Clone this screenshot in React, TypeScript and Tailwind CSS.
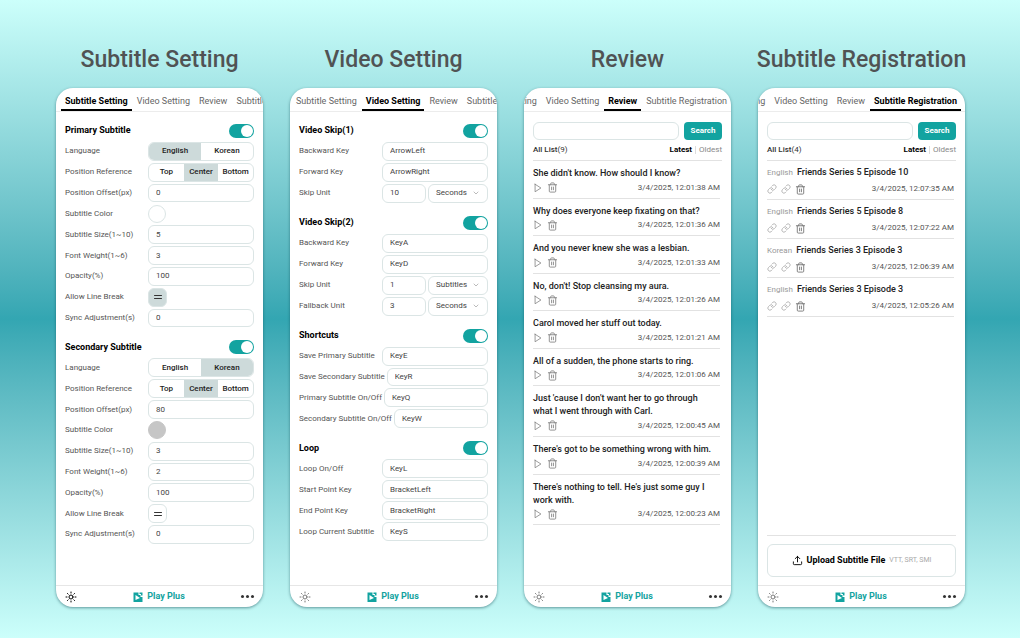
import { ReactNode } from "react";
import { FiChevronDown, FiLink, FiPlay, FiTrash2, FiUpload } from "react-icons/fi";
import { LuEqual, LuSun } from "react-icons/lu";
import clsx from "clsx";

const tabs = ["Subtitle Setting", "Video Setting", "Review", "Subtitle Registration"];

const field = "min-w-0 rounded-md border border-[#dbe5e5] bg-white text-[8px] text-[#444] outline-none";

function Logo() {
    return (
        <svg viewBox="0 0 20 20" className="size-[10px]">
            <path d="M1 1h10v5h4v4h4v10H1z" fill="#12a3a0" />
            <path d="M13 1h6v6h-3V4h-3z" fill="#12a3a0" />
            <path d="M5 6l9 6-9 4z" fill="#fff" />
        </svg>
    );
}

function Panel({ active, tabsClass, dim = true, children }: { active: string; tabsClass: string; dim?: boolean; children: ReactNode }) {
    return (
        <section className="flex min-w-0 flex-col">
            <h2 className="flex justify-center whitespace-nowrap text-[23px] leading-[30px] font-medium text-[#505354]">{active}</h2>
            <div className="mt-[13px] flex flex-1 flex-col overflow-hidden rounded-[17px] bg-white shadow-[0_1px_3px_rgba(0,60,70,0.5)]">
                <nav className={clsx("flex h-6 shrink-0 gap-px overflow-hidden border-b border-[#ececec]", tabsClass)}>
                    {tabs.map((tab) => (
                        <button
                            key={tab}
                            className={clsx("shrink-0 border-b-2 px-1 pt-[5px] text-[9px] leading-4 whitespace-nowrap", tab === active ? "border-black font-bold text-black" : "border-transparent text-[#666]")}
                        >
                            {tab}
                        </button>
                    ))}
                </nav>
                {children}
                <footer className="flex h-[22px] shrink-0 items-center justify-between border-t border-[#e6e6e6] px-[9px]">
                    <button aria-label="Theme"><LuSun size={12} className={dim ? "text-[#777]" : "text-black"} /></button>
                    <a href="#" className="flex items-center gap-1 text-[9px] font-bold text-[#12a3a0]"><Logo />Play Plus</a>
                    <button aria-label="More" className="flex gap-[2px]">
                        <span className="size-[3px] rounded-full bg-[#333]" />
                        <span className="size-[3px] rounded-full bg-[#333]" />
                        <span className="size-[3px] rounded-full bg-[#333]" />
                    </button>
                </footer>
            </div>
        </section>
    );
}

function Group({ title, children }: { title: string; children: ReactNode }) {
    return (
        <>
            <div className="flex min-h-5 flex-1 items-center justify-between not-first:mt-[9px]">
                <h3 className="text-[9px] font-bold text-black">{title}</h3>
                <label className="flex h-[14px] w-[25px] rounded-full bg-[#12a3a0] p-[1px]">
                    <input type="checkbox" role="switch" aria-label={title} defaultChecked className="ml-auto size-3 appearance-none rounded-full bg-white" />
                </label>
            </div>
            {children}
        </>
    );
}

function Row({ label, children }: { label: string; children: ReactNode }) {
    return (
        <div className="flex min-h-5 flex-1 py-[1px]">
            <span className="min-w-[83px] shrink-0 self-center pr-[2px] text-[8px] whitespace-nowrap text-[#555]">{label}</span>
            {children}
        </div>
    );
}

function TextRow({ label, value }: { label: string; value: string }) {
    return (
        <Row label={label}>
            <input aria-label={label} defaultValue={value} className={clsx(field, "w-0 flex-1 px-[7px]")} />
        </Row>
    );
}

function UnitRow({ label, value, unit }: { label: string; value: string; unit: string }) {
    return (
        <Row label={label}>
            <input aria-label={label} defaultValue={value} className={clsx(field, "w-11 px-[7px]")} />
            <div className="ml-[2px] grid flex-1 items-center">
                <select aria-label={`${label} type`} defaultValue={unit} className={clsx(field, "col-start-1 row-start-1 h-full w-full appearance-none px-[7px]")}>
                    <option>Seconds</option>
                    <option>Subtitles</option>
                </select>
                <FiChevronDown size={8} className="pointer-events-none col-start-1 row-start-1 mr-2 justify-self-end text-[#999]" />
            </div>
        </Row>
    );
}

function ChoiceRow({ label, options, value }: { label: string; options: string[]; value: string }) {
    return (
        <Row label={label}>
            <div className={clsx(field, "flex flex-1 overflow-hidden")}>
                {options.map((option) => (
                    <button key={option} className={clsx("w-0 flex-1 font-medium text-[#222]", option === value && "bg-[#cddada]")}>{option}</button>
                ))}
            </div>
        </Row>
    );
}

type Subtitle = { title: string; language: string; offset: string; white: boolean; size: string; weight: string; lineBreak: boolean };

function SubtitleGroup({ title, language, offset, white, size, weight, lineBreak }: Subtitle) {
    return (
        <Group title={title}>
            <ChoiceRow label="Language" options={["English", "Korean"]} value={language} />
            <ChoiceRow label="Position Reference" options={["Top", "Center", "Bottom"]} value="Center" />
            <TextRow label="Position Offset(px)" value={offset} />
            <Row label="Subtitle Color">
                <button aria-label="Subtitle Color" className={clsx("size-[18px] self-center rounded-full border", white ? "border-[#dbe5e5] bg-white" : "border-[#c6c6c6] bg-[#c6c6c6]")} />
            </Row>
            <TextRow label="Subtitle Size(1~10)" value={size} />
            <TextRow label="Font Weight(1~6)" value={weight} />
            <TextRow label="Opacity(%)" value="100" />
            <Row label="Allow Line Break">
                <button aria-label="Allow Line Break" className={clsx("flex w-[19px] items-center justify-center rounded-md border border-[#dbe5e5]", lineBreak && "bg-[#cddada]")}>
                    <LuEqual size={12} className="text-[#333]" />
                </button>
            </Row>
            <TextRow label="Sync Adjustment(s)" value="0" />
        </Group>
    );
}

function ListHead({ count }: { count: number }) {
    return (
        <>
            <form className="flex h-[18px] shrink-0 gap-[5px]">
                <input aria-label="Search text" className={clsx(field, "flex-1 px-[7px]")} />
                <button type="button" className="w-[38px] rounded-[4px] bg-[#12a3a0] text-[8px] font-bold text-white">Search</button>
            </form>
            <div className="flex h-[21px] shrink-0 items-center justify-between border-b border-[#e2e2e2] text-[8px]">
                <span className="font-medium text-[#333]">All List<span className="font-normal">({count})</span></span>
                <span className="flex items-center text-[#888]">
                    <button className="font-bold text-black">Latest</button>
                    <span className="mx-[3px] h-2 w-px bg-[#ddd]" />
                    <button>Oldest</button>
                </span>
            </div>
        </>
    );
}

const reviews = [
    { text: "She didn't know. How should I know?", time: "12:01:38" },
    { text: "Why does everyone keep fixating on that?", time: "12:01:36" },
    { text: "And you never knew she was a lesbian.", time: "12:01:33" },
    { text: "No, don't! Stop cleansing my aura.", time: "12:01:26" },
    { text: "Carol moved her stuff out today.", time: "12:01:21" },
    { text: "All of a sudden, the phone starts to ring.", time: "12:01:06" },
    { text: "Just 'cause I don't want her to go through what I went through with Carl.", time: "12:00:45" },
    { text: "There's got to be something wrong with him.", time: "12:00:39" },
    { text: "There's nothing to tell. He's just some guy I work with.", time: "12:00:23" },
];

const files = [
    { language: "English", name: "Friends Series 5 Episode 10", time: "12:07:35" },
    { language: "English", name: "Friends Series 5 Episode 8", time: "12:07:22" },
    { language: "Korean", name: "Friends Series 3 Episode 3", time: "12:06:39" },
    { language: "English", name: "Friends Series 3 Episode 3", time: "12:05:26" },
];

export default function App() {
    return (
        <main className="grid min-h-screen grid-cols-4 gap-[27px] bg-linear-to-b from-[#ccfffb] via-[#33a6b2] to-[#ccfffb] pt-[45px] pr-[55px] pb-[31px] pl-14 font-[Roboto,sans-serif]">
            <Panel active="Subtitle Setting" tabsClass="pl-[5px]" dim={false}>
                <div className="flex flex-1 flex-col px-[9px] pt-[9px] pb-10">
                    <SubtitleGroup title="Primary Subtitle" language="English" offset="0" white size="5" weight="3" lineBreak />
                    <SubtitleGroup title="Secondary Subtitle" language="Korean" offset="80" white={false} size="3" weight="2" lineBreak={false} />
                </div>
            </Panel>

            <Panel active="Video Setting" tabsClass="pl-[2px]">
                <div className="flex flex-1 flex-col px-[9px] pt-[9px] pb-[43px]">
                    <Group title="Video Skip(1)">
                        <TextRow label="Backward Key" value="ArrowLeft" />
                        <TextRow label="Forward Key" value="ArrowRight" />
                        <UnitRow label="Skip Unit" value="10" unit="Seconds" />
                    </Group>
                    <Group title="Video Skip(2)">
                        <TextRow label="Backward Key" value="KeyA" />
                        <TextRow label="Forward Key" value="KeyD" />
                        <UnitRow label="Skip Unit" value="1" unit="Subtitles" />
                        <UnitRow label="Fallback Unit" value="3" unit="Seconds" />
                    </Group>
                    <Group title="Shortcuts">
                        <TextRow label="Save Primary Subtitle" value="KeyE" />
                        <TextRow label="Save Secondary Subtitle" value="KeyR" />
                        <TextRow label="Primary Subtitle On/Off" value="KeyQ" />
                        <TextRow label="Secondary Subtitle On/Off" value="KeyW" />
                    </Group>
                    <Group title="Loop">
                        <TextRow label="Loop On/Off" value="KeyL" />
                        <TextRow label="Start Point Key" value="BracketLeft" />
                        <TextRow label="End Point Key" value="BracketRight" />
                        <TextRow label="Loop Current Subtitle" value="KeyS" />
                    </Group>
                </div>
            </Panel>

            <Panel active="Review" tabsClass="justify-end">
                <div className="flex flex-1 flex-col px-[9px] pt-[10px] pb-[60px]">
                    <ListHead count={9} />
                    <ul className="flex flex-1 flex-col pr-[2px]">
                        {reviews.map((item) => (
                            <li key={item.time} className="flex grow flex-col justify-between border-b border-[#e2e2e2] pt-[6px] pb-1">
                                <p className="pr-1 text-[9px] leading-[13px] font-medium text-[#222]">{item.text}</p>
                                <div className="flex h-3 items-center gap-1 text-[#888]">
                                    <button aria-label="Play"><FiPlay size={10} /></button>
                                    <button aria-label="Delete"><FiTrash2 size={11} /></button>
                                    <span className="ml-auto text-[8px] text-[#555]">3/4/2025, {item.time} AM</span>
                                </div>
                            </li>
                        ))}
                    </ul>
                </div>
            </Panel>

            <Panel active="Subtitle Registration" tabsClass="justify-end pr-1">
                <div className="flex flex-1 flex-col px-[9px] pt-[10px] pb-2">
                    <ListHead count={4} />
                    <ul className="flex flex-1 flex-col pr-[2px]">
                        {files.map((item) => (
                            <li key={item.time} className="flex h-[39px] flex-col justify-between border-b border-[#e2e2e2] pt-[5px] pb-1">
                                <p className="flex items-center gap-1 text-[9px] leading-[13px] font-medium text-[#222]">
                                    <span className="text-[8px] font-normal text-[#999]">{item.language}</span>
                                    {item.name}
                                </p>
                                <div className="flex h-3 items-center gap-1 text-[#aaa]">
                                    <button aria-label="Link primary"><FiLink size={10} /></button>
                                    <button aria-label="Link secondary"><FiLink size={10} /></button>
                                    <button aria-label="Delete"><FiTrash2 size={11} className="text-[#777]" /></button>
                                    <span className="ml-auto text-[8px] text-[#555]">3/4/2025, {item.time} AM</span>
                                </div>
                            </li>
                        ))}
                    </ul>
                    <div className="border-t border-[#e2e2e2] pt-2">
                        <button className="flex h-[33px] w-full items-center justify-center gap-1 rounded-md border border-[#dbe5e5] text-[9px]">
                            <FiUpload size={11} />
                            <span className="font-bold text-black">Upload Subtitle File</span>
                            <span className="text-[7px] text-[#aaa]">VTT, SRT, SMI</span>
                        </button>
                    </div>
                </div>
            </Panel>
        </main>
    );
}
